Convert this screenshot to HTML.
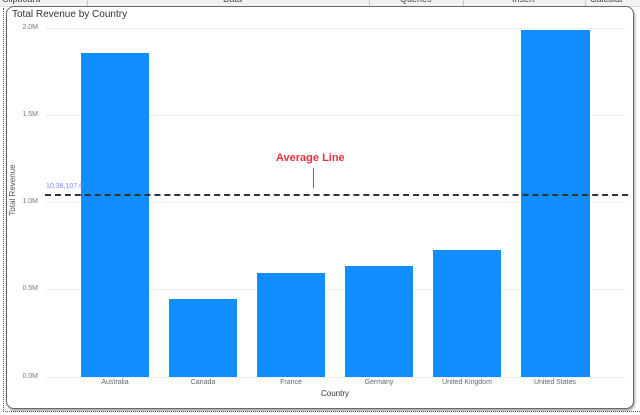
<!DOCTYPE html>
<html><head><style>
body{margin:0;width:640px;height:415px;background:#fff;position:relative;overflow:hidden;font-family:"Liberation Sans",sans-serif}
.top{position:absolute;left:0;top:0;width:640px;height:6px;background:#f3f2f1;border-bottom:1px solid #d6d6d6;overflow:hidden}
.top span{position:absolute;top:-6px;font-size:9px;color:#444}
.top i{position:absolute;top:0;width:1px;height:6px;background:#c8c8c8}
.card{position:absolute;left:6px;top:6px;width:626px;height:401px;border:1px solid #6a6a6a;border-radius:8px;background:#fff;box-shadow:1px 2px 2px rgba(0,0,0,.35)}
.a{position:absolute}
.bar{position:absolute;background:#118dff;width:68px;bottom:38px}
.g{position:absolute;left:45px;width:583px;border-top:1px dotted #e4e4e4}
.yl{position:absolute;left:0;width:38px;text-align:right;font-size:7px;color:#777}
.xl{position:absolute;top:379px;width:90px;text-align:center;font-size:7px;color:#666}
</style></head><body>
<div class="top"><span style="left:2px">Clipboard</span><span style="left:223px">Data</span><span style="left:400px">Queries</span><span style="left:512px">Insert</span><span style="left:590px">Calculat</span>
<i style="left:87px"></i><i style="left:369px"></i><i style="left:463px"></i><i style="left:585px"></i></div>
<div class="a" style="left:3px;top:8px;height:404px;border-left:1px dotted #555"></div>
<div class="a" style="left:3px;top:411px;width:637px;border-top:1px dotted #555"></div>
<div class="card"></div>
<div class="a" style="left:12px;top:9px;font-size:10px;color:#333">Total Revenue by Country</div>
<div class="g" style="top:28px"></div><div class="g" style="top:115px"></div><div class="g" style="top:202px"></div><div class="g" style="top:289px"></div><div class="g" style="top:377px"></div>
<div class="yl" style="top:24px">2.0M</div><div class="yl" style="top:111px">1.5M</div><div class="yl" style="top:198px">1.0M</div><div class="yl" style="top:285px">0.5M</div><div class="yl" style="top:373px">0.0M</div>
<div class="a" style="left:8px;top:230px;transform:rotate(-90deg);transform-origin:left top;font-size:8px;color:#555;width:80px;text-align:center">Total Revenue</div>
<div class="bar" style="left:81px;top:53px"></div>
<div class="bar" style="left:169px;top:299px"></div>
<div class="bar" style="left:257px;top:273px"></div>
<div class="bar" style="left:345px;top:266px"></div>
<div class="bar" style="left:433px;top:250px"></div>
<div class="bar" style="left:521px;top:30px;width:69px"></div>
<div class="a" style="left:45px;top:194px;width:583px;border-top:2px dashed #333"></div>
<div class="a" style="left:46px;top:183px;font-size:7px;color:#7b8ce8">10,38,107.6</div>
<div class="a" style="left:276px;top:152px;font-size:11px;font-weight:bold;color:#e8313f">Average Line</div>
<div class="a" style="left:313px;top:168px;width:1px;height:20px;background:#e8313f"></div>
<div class="xl" style="left:70px">Australia</div><div class="xl" style="left:158px">Canada</div><div class="xl" style="left:246px">France</div><div class="xl" style="left:334px">Germany</div><div class="xl" style="left:422px">United Kingdom</div><div class="xl" style="left:510px">United States</div>
<div class="a" style="left:290px;top:389px;width:90px;text-align:center;font-size:8px;color:#333">Country</div>
</body></html>
